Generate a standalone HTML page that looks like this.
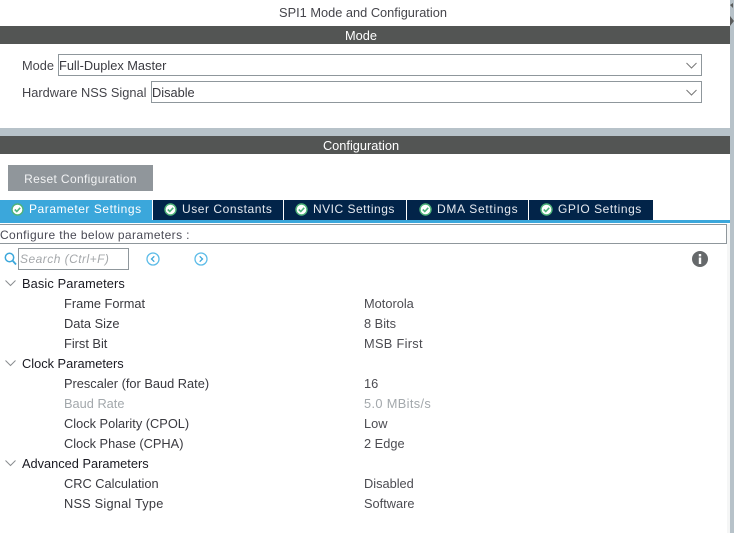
<!DOCTYPE html>
<html><head><meta charset="utf-8">
<style>
html,body{margin:0;padding:0;background:#fff}
#p{position:relative;width:734px;height:533px;overflow:hidden;background:#fff;font-family:"Liberation Sans",sans-serif;font-size:12.8px;color:#39393f}
#p div,#p svg{position:absolute}
.t{white-space:nowrap;line-height:20px;height:20px}
.bar{left:0;width:730px;height:18px;background:#535554;color:#fff;text-align:center;line-height:20px;padding-right:8px;box-sizing:border-box}
.sel{background:#fff;border:1px solid #8f979c;box-sizing:border-box;line-height:21px;padding-left:0;white-space:nowrap}
.tab{top:200px;height:20px;background:#022449;color:#e6eaf0;line-height:19px;letter-spacing:.55px;white-space:nowrap;font-size:12px}
.h{color:#1a1a22;left:22px}
.l{left:64px}
.v{left:364px;color:#4c4c52}
.d{color:#a3a8ac}
</style></head><body>
<div id="p">
<div style="left:730px;top:0;width:4px;height:533px;background:#b7c2c9"></div>
<div style="left:727px;top:224px;width:3px;height:309px;background:#f5f6f6"></div>
<svg style="left:730px;top:0" width="4" height="30"><path d="M0 16L4 21L0 26Z" fill="#5a5c5c"/><path d="M0 5L3 3L3 8Z" fill="#5a5c5c"/></svg>
<div class="t" style="left:0;width:726px;top:3px;text-align:center;color:#45454b">SPI1 Mode and Configuration</div>
<div class="bar" style="top:26px">Mode</div>
<div class="t" style="left:22px;top:56px;color:#45454b">Mode</div>
<div class="sel" style="left:58px;top:54px;width:644px;height:22px">Full-Duplex Master</div>
<div class="t" style="left:22px;top:83px;color:#45454b">Hardware NSS Signal</div>
<div class="sel" style="left:151px;top:81px;width:551px;height:22px">Disable</div>
<svg style="left:686px;top:62px" width="11" height="7"><path d="M.5 1L5.5 6L10.500 1" fill="none" stroke="#777" stroke-width="1"/></svg>
<svg style="left:686px;top:89px" width="11" height="7"><path d="M.5 1L5.5 6L10.500 1" fill="none" stroke="#777" stroke-width="1"/></svg>
<div style="left:0;top:128px;width:730px;height:8px;background:#b7c2c9"></div>
<div class="bar" style="top:136px">Configuration</div>
<div style="left:8px;top:165px;width:145px;height:26px;background:#90969b;color:#f2f3f4;text-align:center;line-height:28px;font-size:12px;letter-spacing:.35px;white-space:nowrap">Reset Configuration</div>

<div class="tab" style="left:0;width:152px;background:#3ba7db;color:#fff"><span style="position:absolute;left:29px">Parameter Settings</span></div>
<div class="tab" style="left:153px;width:130px"><span style="position:absolute;left:29px">User Constants</span></div>
<div class="tab" style="left:284px;width:122px"><span style="position:absolute;left:29px;letter-spacing:.5px">NVIC Settings</span></div>
<div class="tab" style="left:407px;width:121px"><span style="position:absolute;left:30px;letter-spacing:.72px">DMA Settings</span></div>
<div class="tab" style="left:529px;width:124px"><span style="position:absolute;left:29px">GPIO Settings</span></div>
<svg style="left:11px;top:203px" width="13" height="13"><circle cx="6.500" cy="6.500" r="5.500" fill="#fff" stroke="#4fb37a" stroke-width="1.400"/><path d="M3.800 6.500L5.800 8.500L9.200 4.800" fill="none" stroke="#4fb37a" stroke-width="1.600"/></svg>
<svg style="left:164px;top:203px" width="13" height="13"><circle cx="6.500" cy="6.500" r="5.500" fill="#fff" stroke="#4fb37a" stroke-width="1.400"/><path d="M3.800 6.500L5.800 8.500L9.200 4.800" fill="none" stroke="#4fb37a" stroke-width="1.600"/></svg>
<svg style="left:295px;top:203px" width="13" height="13"><circle cx="6.500" cy="6.500" r="5.500" fill="#fff" stroke="#4fb37a" stroke-width="1.400"/><path d="M3.800 6.500L5.800 8.500L9.200 4.800" fill="none" stroke="#4fb37a" stroke-width="1.600"/></svg>
<svg style="left:419px;top:203px" width="13" height="13"><circle cx="6.500" cy="6.500" r="5.500" fill="#fff" stroke="#4fb37a" stroke-width="1.400"/><path d="M3.800 6.500L5.800 8.500L9.200 4.800" fill="none" stroke="#4fb37a" stroke-width="1.600"/></svg>
<svg style="left:540px;top:203px" width="13" height="13"><circle cx="6.500" cy="6.500" r="5.500" fill="#fff" stroke="#4fb37a" stroke-width="1.400"/><path d="M3.800 6.500L5.800 8.500L9.200 4.800" fill="none" stroke="#4fb37a" stroke-width="1.600"/></svg>
<div style="left:0;top:220px;width:730px;height:3px;background:#3ba7db"></div>

<div style="left:-1px;top:224px;width:728px;height:20px;border:1px solid #8f979c;box-sizing:border-box"></div>
<div class="t" style="left:0;top:225px;font-size:12px;letter-spacing:.39px;color:#4a4a55">Configure the below parameters :</div>

<svg style="left:4px;top:252px" width="13" height="14"><circle cx="5.500" cy="5.500" r="4.200" fill="none" stroke="#3ba7db" stroke-width="1.500"/><path d="M8.500 8.500L12 12.500" stroke="#3ba7db" stroke-width="1.800"/></svg>
<div style="left:18px;top:248px;width:111px;height:22px;border:1px solid #8f979c;box-sizing:border-box"></div>
<div class="t" style="left:20px;top:249px;font-size:12px;font-style:italic;color:#a5a8ab;letter-spacing:.47px">Search (Ctrl+F)</div>
<svg style="left:146px;top:252px" width="14" height="14"><circle cx="7" cy="7" r="6" fill="#fff" stroke="#5dbce8" stroke-width="1.300"/><path d="M8.300 4.300L5.500 7L8.300 9.700" fill="none" stroke="#3ba7db" stroke-width="1.300"/></svg>
<svg style="left:194px;top:252px" width="14" height="14"><circle cx="7" cy="7" r="6" fill="#fff" stroke="#5dbce8" stroke-width="1.300"/><path d="M5.700 4.300L8.500 7L5.700 9.700" fill="none" stroke="#3ba7db" stroke-width="1.300"/></svg>
<svg style="left:692px;top:251px" width="16" height="16"><circle cx="8" cy="8" r="8" fill="#66696b"/><rect x="6.800" y="3" width="2.400" height="2.400" fill="#fff"/><rect x="6.800" y="6.500" width="2.400" height="6.500" fill="#fff"/></svg>

<svg style="left:5px;top:280px" width="12" height="7"><path d="M.5 .5L5.500 5.500L10.500 .5" fill="none" stroke="#8a8d90"/></svg>
<svg style="left:5px;top:360px" width="12" height="7"><path d="M.5 .5L5.500 5.500L10.500 .5" fill="none" stroke="#8a8d90"/></svg>
<svg style="left:5px;top:460px" width="12" height="7"><path d="M.5 .5L5.500 5.500L10.500 .5" fill="none" stroke="#8a8d90"/></svg>

<div class="t h" style="top:274px;letter-spacing:.12px">Basic Parameters</div>
<div class="t l" style="top:294px">Frame Format</div><div class="t v" style="top:294px">Motorola</div>
<div class="t l" style="top:314px">Data Size</div><div class="t v" style="top:314px">8 Bits</div>
<div class="t l" style="top:334px">First Bit</div><div class="t v" style="top:334px;letter-spacing:.3px">MSB First</div>
<div class="t h" style="top:354px">Clock Parameters</div>
<div class="t l" style="top:374px">Prescaler (for Baud Rate)</div><div class="t v" style="top:374px">16</div>
<div class="t l d" style="top:394px">Baud Rate</div><div class="t v d" style="top:394px;letter-spacing:.35px">5.0 MBits/s</div>
<div class="t l" style="top:414px">Clock Polarity (CPOL)</div><div class="t v" style="top:414px">Low</div>
<div class="t l" style="top:434px">Clock Phase (CPHA)</div><div class="t v" style="top:434px">2 Edge</div>
<div class="t h" style="top:454px">Advanced Parameters</div>
<div class="t l" style="top:474px">CRC Calculation</div><div class="t v" style="top:474px">Disabled</div>
<div class="t l" style="top:494px;letter-spacing:.2px">NSS Signal Type</div><div class="t v" style="top:494px">Software</div>
</div>
</body></html>
